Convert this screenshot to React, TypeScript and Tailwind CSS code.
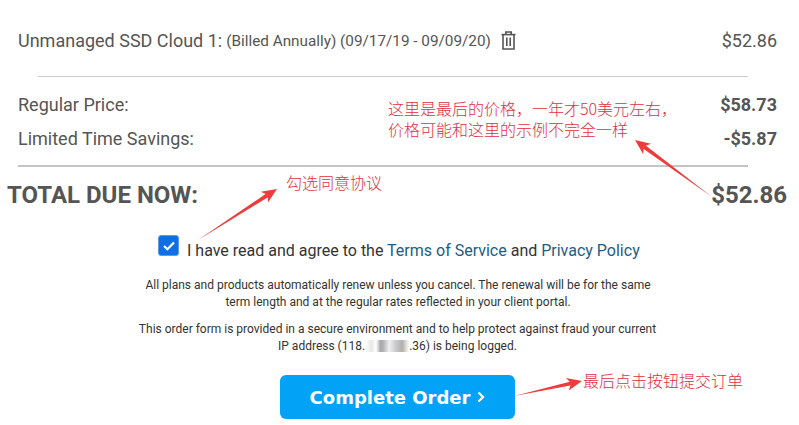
const CJK = "font-['Noto_Sans_CJK_SC',sans-serif] font-light";

function Trash() {
  return (
    <svg width="15" height="19" viewBox="0 0 15 19" fill="none" stroke="#555" strokeWidth="1.6">
      <path d="M0.5 3.6h14" />
      <path d="M4.8 3.6V1h5.4v2.6" />
      <path d="M2 3.6V18h11V3.6" />
      <path d="M5.8 6.5v8.5M9.2 6.5v8.5" />
    </svg>
  );
}

function Arrow({ x1, y1, x2, y2 }: { x1: number; y1: number; x2: number; y2: number }) {
  const dx = x2 - x1;
  const dy = y2 - y1;
  const len = Math.hypot(dx, dy);
  const ux = dx / len;
  const uy = dy / len;
  const bx = x2 - ux * 15;
  const by = y2 - uy * 15;
  const head = `${x2},${y2} ${bx - uy * 6.5},${by + ux * 6.5} ${x2 - ux * 11},${y2 - uy * 11} ${bx + uy * 6.5},${by - ux * 6.5}`;
  const tail = `${x1},${y1} ${x2 - ux * 11 - uy * 2},${y2 - uy * 11 + ux * 2} ${x2 - ux * 11 + uy * 2},${y2 - uy * 11 - ux * 2}`;
  return (
    <g fill="#ee3b3b">
      <polygon points={tail} />
      <polygon points={head} />
    </g>
  );
}

export default function App() {
  return (
    <div className="relative h-[425px] w-[799px] overflow-hidden bg-white font-['Roboto',sans-serif] text-[#555]">
      <div className="flex h-[76px] items-start justify-between pl-[18px] pr-[22px] pt-[28px]">
        <div className="flex items-center">
          <span className="text-[18px] leading-[26px]">Unmanaged SSD Cloud 1:</span>
          <span className="ml-1 text-[15.3px] leading-[26px]">(Billed Annually) (09/17/19 - 09/09/20)</span>
          <span className="ml-[10px] flex -translate-y-px"><Trash /></span>
        </div>
        <span className="text-[18px] leading-[26px]">$52.86</span>
      </div>

      <div className="ml-[38px] mr-[51px] h-px bg-[#ccc]" />

      <div className="flex h-[41px] items-end justify-between pl-[18px] pr-[22px]">
        <span className="text-[18px] leading-[26px]">Regular Price:</span>
        <span className="text-[18px] font-bold leading-[26px]">$58.73</span>
      </div>
      <div className="flex h-[34px] items-end justify-between pl-[18px] pr-[22px]">
        <span className="text-[18px] leading-[26px]">Limited Time Savings:</span>
        <span className="text-[18px] font-bold leading-[26px]">-$5.87</span>
      </div>

      <div className="ml-[18px] mr-[51px] mt-[13px] h-0.5 bg-[#c4c4c4]" />

      <div className="flex h-[50px] items-end justify-between pb-[7px] pl-[7px] pr-3">
        <span className="text-[24px] font-bold leading-[30px]">TOTAL DUE NOW:</span>
        <span className="text-[24px] font-bold leading-[30px]">$52.86</span>
      </div>

      <div className="mt-[18px] flex items-start pl-[158px]">
        <span className="flex h-[21px] w-[21px] items-center justify-center rounded-[3px] border border-[#5b9bea] bg-[#0f6fe3]">
          <svg width="12" height="10" viewBox="0 0 12 10" fill="none" stroke="#fff" strokeWidth="2.2">
            <path d="M1 5 4.4 8.2 11 1.4" />
          </svg>
        </span>
        <span className="ml-2 mt-1 text-[16px] leading-[24px] text-[#333]">
          I have read and agree to the <span className="text-[#1d5c85]">Terms of Service</span> and{" "}
          <span className="text-[#1d5c85]">Privacy Policy</span>
        </span>
      </div>

      <div className="mt-[14px] text-center text-[12px] leading-[17px] text-[#333]">
        <p className="pr-[3px]">
          All plans and products automatically renew unless you cancel. The renewal will be for the same
          <br />
          term length and at the regular rates reflected in your client portal.
        </p>
        <p className="mt-[10px] pr-[4px]">
          This order form is provided in a secure environment and to help protect against fraud your current
          <br />
          IP address (118.<span className="inline-block h-[12px] w-[44px] bg-[linear-gradient(90deg,#fff,#e6e9e6_15%,#fff_25%,#a9a9ad_35%,#b5b5b8_42%,#eef0ee_55%,#c9c9cc_70%,#b0b0b5_85%,#fff)] align-[-2px]" />.36) is being logged.
        </p>
      </div>

      <div className="mt-5 flex justify-center pr-[4px]">
        <button className="flex h-[44px] w-[235px] items-center justify-center rounded-[6px] bg-[#02a2f6] font-['DejaVu_Sans',sans-serif] text-[18px] font-bold text-white">
          Complete Order
          <svg className="ml-[7px]" width="8" height="12" viewBox="0 0 8 12" fill="none" stroke="#fff" strokeWidth="2.4">
            <path d="M1.5 1.5 6 6l-4.5 4.5" />
          </svg>
        </button>
      </div>

      <div className={`absolute left-[388px] top-[98px] text-[16px] leading-[21px] text-[#e0303f] ${CJK}`}>
        这里是最后的价格，一年才50美元左右，
        <br />
        价格可能和这里的示例不完全一样
      </div>
      <div className={`absolute left-[286px] top-[172px] text-[16px] leading-[21px] text-[#e0303f] ${CJK}`}>勾选同意协议</div>
      <div className={`absolute left-[583px] top-[370px] text-[16px] leading-[21px] text-[#e0303f] ${CJK}`}>最后点击按钮提交订单</div>

      <svg className="pointer-events-none absolute left-0 top-0" width="799" height="425">
        <Arrow x1={198} y1={240} x2={277} y2={189} />
        <Arrow x1={712} y1={197} x2={635} y2={140} />
        <Arrow x1={514} y1={396} x2={582} y2={381} />
      </svg>
    </div>
  );
}
